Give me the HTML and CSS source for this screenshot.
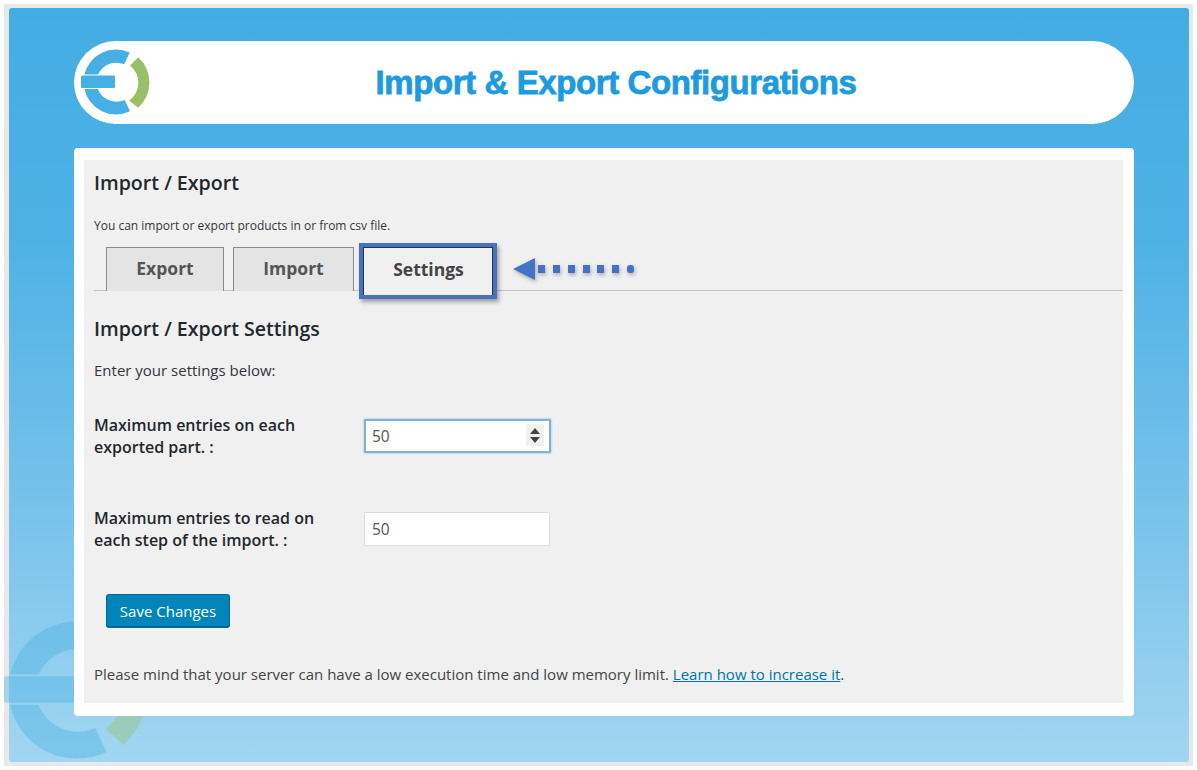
FILE: index.html
```html
<!DOCTYPE html>
<html lang="en">
<head>
<meta charset="utf-8">
<title>Import &amp; Export Configurations</title>
<link rel="stylesheet" href="styles.css">
</head>
<body>
<svg class="defs" width="0" height="0" aria-hidden="true">
  <symbol id="logo" viewBox="0 0 70 70">
    <path class="arc-blue" d="M48.7 5.6A32.5 32.5 0 0 0 3.4 27.5H17A20 20 0 0 1 43.2 17.3Z"/>
    <path class="arc-blue" d="M3.3 42A32.5 32.5 0 0 0 49 64.3L43.6 53A20 20 0 0 1 16.8 42Z"/>
    <path class="arc-green" d="M57.3 10.2A34 34 0 0 1 57 60.8L48.3 53.5A22 22 0 0 0 49 18.5Z"/>
    <rect class="bar-blue" x="0" y="28.5" width="34" height="12.5" rx="1.5"/>
  </symbol>
</svg>
<div class="frame">
  <svg class="watermark" viewBox="0 0 70 70"><use href="#logo"/></svg>
  <div class="content">
    <header class="banner">
      <svg class="logo" viewBox="0 0 70 70"><use href="#logo"/></svg>
      <h1 class="banner-title">Import &amp; Export Configurations</h1>
    </header>
    <main class="card">
      <section class="panel">
        <h2 class="title">Import / Export</h2>
        <p class="intro">You can import or export products in or from csv file.</p>
        <nav class="tabs">
          <a class="tab">Export</a>
          <a class="tab">Import</a>
          <a class="tab tab-active">Settings</a>
          <svg class="arrow" viewBox="0 0 130 30" width="130" height="30">
            <path class="arrow-shape" d="M3 14 25 3V25Z"/>
            <rect class="arrow-shape" x="28" y="10" width="7" height="8"/>
            <rect class="arrow-shape" x="43" y="10" width="7" height="8"/>
            <rect class="arrow-shape" x="58" y="10" width="7" height="8"/>
            <rect class="arrow-shape" x="73" y="10" width="7" height="8"/>
            <rect class="arrow-shape" x="87" y="10" width="7" height="8"/>
            <rect class="arrow-shape" x="102" y="10" width="7" height="8"/>
            <rect class="arrow-shape" x="117" y="10" width="7" height="8" rx="3"/>
          </svg>
        </nav>
        <h2 class="title title-settings">Import / Export Settings</h2>
        <p class="lead">Enter your settings below:</p>
        <div class="field field-first">
          <label class="field-label">Maximum entries on each exported part. :</label>
          <div class="input-wrap">
            <input class="input input-focus" type="text" value="50">
            <span class="spin">
              <svg viewBox="0 0 18 22" width="18" height="22"><path class="spin-arrow" d="M9 4 14 10H4Z"/><path class="spin-arrow" d="M4 13H14L9 19Z"/></svg>
            </span>
          </div>
        </div>
        <div class="field field-second">
          <label class="field-label">Maximum entries to read on each step of the import. :</label>
          <div class="input-wrap">
            <input class="input" type="text" value="50">
          </div>
        </div>
        <button class="save" type="button">Save Changes</button>
        <p class="note">Please mind that your server can have a low execution time and low memory limit. <a class="note-link" href="#">Learn how to increase it</a>.</p>
      </section>
    </main>
  </div>
</div>
</body>
</html>
```
FILE: styles.css
```css
* { box-sizing: border-box; }
html, body { margin: 0; padding: 0; background: #fff; }
body { font-family: "Open Sans", "Liberation Sans", sans-serif; color: #32373c; width: 1197px; height: 770px; overflow: hidden; }
.defs { position: absolute; }
.arc-blue { fill: #46afe3; }
.arc-green { fill: #9bbf66; }
.bar-blue { fill: #46afe3; }

.frame {
  position: relative;
  width: 1189px;
  height: 762px;
  margin: 4px 0 0 4px;
  padding: 4px 4px 4px 5px;
  background: #e8e8e8;
  overflow: hidden;
}
.content {
  width: 1180px;
  height: 754px;
  padding: 33px 0 0 65px;
  border-radius: 3px;
  background: linear-gradient(#43ade3 0%, #4eb1e5 30%, #7cc4ec 70%, #a1d6f1 100%);
}
.watermark {
  position: absolute;
  left: -1px;
  top: 612px;
  width: 148px;
  height: 148px;
  opacity: .38;
}
.banner {
  position: relative;
  width: 1060px;
  height: 83px;
  border-radius: 42px;
  background: #fff;
  display: flex;
  align-items: center;
  justify-content: center;
  padding-left: 24px;
}
.logo { position: absolute; left: 7px; top: 5.5px; width: 70px; height: 70px; }
.banner-title {
  margin: 0;
  font-family: "Liberation Sans", Arial, sans-serif;
  font-weight: 700;
  font-size: 33px;
  line-height: 40px;
  letter-spacing: -.4px;
  color: #1e9be0;
  -webkit-text-stroke: .8px #1e9be0;
  white-space: nowrap;
}
.card {
  position: relative;
  width: 1060px;
  height: 568px;
  margin-top: 24px;
  padding: 12px 11px 13px 10px;
  background: #fff;
  border-radius: 4px;
}
.panel {
  height: 543px;
  padding: 10px 0 0 10px;
  background: #f0f0f0;
}
.title {
  margin: 0;
  font-size: 19.6px;
  line-height: 26px;
  font-weight: 600;
  color: #23282d;
}
.intro { margin: 21px 0 0; font-size: 12px; line-height: 18px; color: #32373c; }
.tabs {
  display: flex;
  height: 48px;
  margin-top: 8px;
  padding-left: 12px;
  border-bottom: 1px solid #c4c4c4;
  align-items: flex-end;
}
.tab {
  width: 118px;
  height: 44px;
  margin-right: 9px;
  margin-bottom: -1px;
  padding-bottom: 3px;
  display: flex;
  align-items: center;
  justify-content: center;
  background: #e4e4e4;
  border: 1px solid #8a8a8a;
  border-bottom: 0;
  font-size: 17.5px;
  font-weight: 700;
  color: #555;
}
.tab:nth-child(2) { width: 121px; margin-right: 5px; }
.tab-active {
  position: relative;
  width: 138px;
  height: 56px;
  margin-bottom: -9px;
  margin-right: 13px;
  padding: 0 0 5px 1px;
  background: #f0f0f0;
  border: 4px solid #4a72b8;
  box-shadow: inset 1px 1px 0 #1c3461, inset -1px 0 0 #1c3461, 2px 3px 4px rgba(0, 0, 0, .35);
  color: #444;
}
.arrow {
  align-self: center;
  margin-top: 6px;
  filter: drop-shadow(1px 2px 2px rgba(0, 0, 0, .3));
}
.arrow-shape { fill: #4472c4; }
.title-settings { margin-top: 25px; }
.lead { margin: 17px 0 0; font-size: 15px; line-height: 22px; color: #32373c; }
.field { display: flex; align-items: center; }
.field-first { margin-top: 33px; }
.field-second { margin-top: 49px; }
.field-label {
  width: 270px;
  padding-right: 45px;
  font-size: 16px;
  line-height: 22px;
  font-weight: 600;
  color: #23282d;
}
.input-wrap { position: relative; width: 187px; height: 34px; }
.input {
  display: block;
  width: 186px;
  height: 34px;
  padding: 0 7px;
  border: 1px solid #ddd;
  border-radius: 1px;
  background: #fff;
  font-family: inherit;
  font-size: 15.5px;
  color: #555;
  outline: 0;
}
.input-focus { width: 187px; border: 2px solid #7db3d8; padding: 0 6px; box-shadow: 0 0 2px rgba(30, 140, 190, .6); }
.spin {
  position: absolute;
  right: 7px;
  top: 5px;
  width: 18px;
  height: 22px;
  background: #f0f0f0;
}
.spin svg { display: block; }
.spin-arrow { fill: #444; }
.save {
  display: block;
  width: 124px;
  height: 34px;
  margin: 43px 0 0 12px;
  padding: 0;
  background: #0085ba;
  border: 1px solid #006799;
  border-bottom-width: 2px;
  border-radius: 3px;
  color: #fff;
  font-family: inherit;
  font-size: 15px;
}
.note { margin: 35px 0 0; font-size: 15px; line-height: 22px; color: #444; }
.note-link { color: #0073aa; text-decoration: underline; }
```
